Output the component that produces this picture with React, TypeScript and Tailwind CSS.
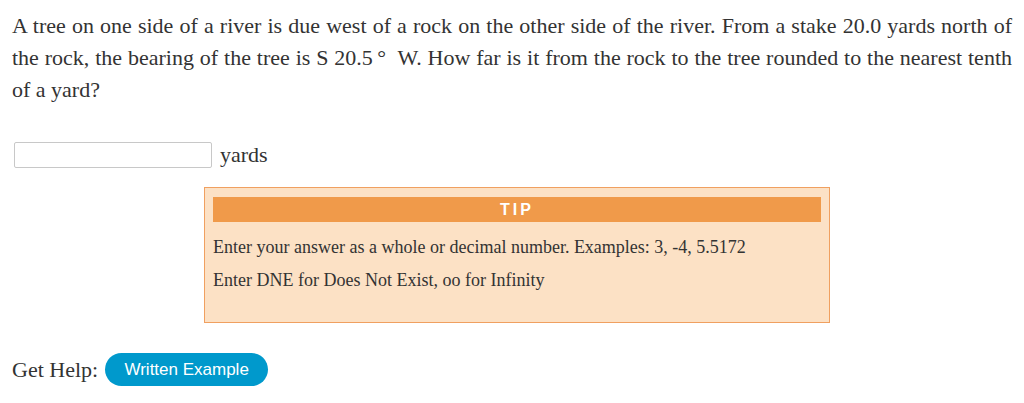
const question =
  "A tree on one side of a river is due west of a rock on the other side of the river. From a stake 20.0 yards north of the rock, the bearing of the tree is S 20.5\u2009°\u00a0 W. How far is it from the rock to the tree rounded to the nearest tenth of a yard?";

export default function App() {
  return (
    <main className="w-[1024px] h-[403px] bg-white text-[#333] font-['Liberation_Serif',serif] overflow-hidden">
      <div className="px-3 pt-[10px]">
        <p className="text-[22px] leading-[32px] text-justify">{question}</p>

        <div className="mt-[36px] flex items-center gap-2 pl-[2px]">
          <input
            type="text"
            className="w-[198px] h-[26px] border border-[#c8c8c8] rounded-[2px] bg-white"
            aria-label="answer"
          />
          <span className="text-[22px] leading-[26px]">yards</span>
        </div>

        <div className="ml-[192px] mt-[19px] w-[626px] h-[136px] bg-[#fce1c5] border border-[#f0a060] px-2 pt-[9px]">
          <div className="h-[25px] bg-[#f09a4a] flex items-center justify-center text-white font-['Liberation_Sans',sans-serif] font-bold text-[16px] tracking-[3px]">
            TIP
          </div>
          <p className="mt-[15px] text-[18px] leading-[20px]">
            Enter your answer as a whole or decimal number. Examples: 3, -4, 5.5172
          </p>
          <p className="mt-[13px] text-[18px] leading-[20px]">Enter DNE for Does Not Exist, oo for Infinity</p>
        </div>

        <div className="mt-[30px] flex items-center gap-[7px]">
          <span className="text-[22px]">Get Help:</span>
          <button className="h-[33px] w-[163px] rounded-full bg-[#0099cc] text-white font-['Liberation_Sans',sans-serif] text-[17px]">
            Written Example
          </button>
        </div>
      </div>
    </main>
  );
}
